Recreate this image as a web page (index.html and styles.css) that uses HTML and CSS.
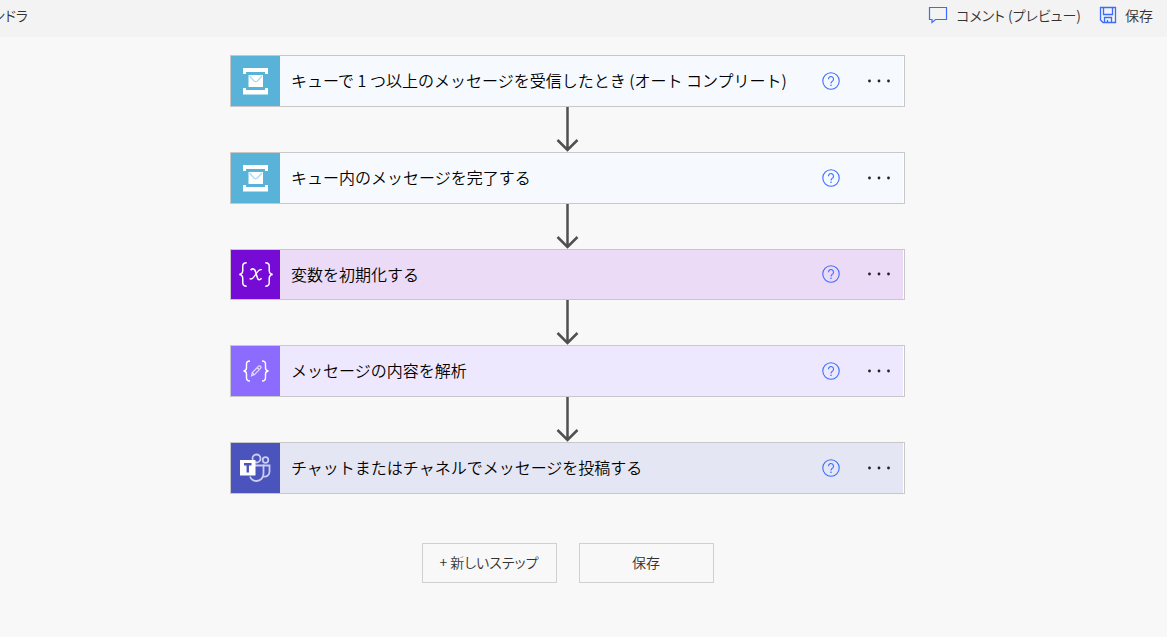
FILE: index.html
```html
<!DOCTYPE html>
<html lang="ja">
<head>
  <meta charset="UTF-8">
  <meta name="viewport" content="width=device-width, initial-scale=1.0">
  <title>フロー</title>
  <link rel="stylesheet" href="styles.css">
</head>
<body>
  <!-- shared icons -->
  <svg class="sprite" aria-hidden="true">
    <symbol id="icon-queue" viewBox="0 0 49 50">
      <path d="M12 12h25v6h-3v-2H15v2h-3zM12 38.500h25v-6.500h-3v2H15v-2h-3z" fill="#fff"/>
      <path d="M17.500 19h14.500v12H17.500z" fill="#fff"/>
      <path d="M18.500 20l4.500 5q1.700 1.300 3.400 0l4.600-5" fill="none" stroke="#a9d9ec" stroke-width="1.200"/>
    </symbol>
    <symbol id="icon-help" viewBox="0 0 18 18">
      <circle cx="9" cy="9" r="8.200" fill="none" stroke="currentColor" stroke-width="1.100"/>
      <path d="M6.500 7.200a2.500 2.500 0 1 1 4.300 1.600C9.800 9.700 9 10.200 9 11.400" fill="none" stroke="currentColor" stroke-width="1.100"/>
      <circle cx="9" cy="13.300" r=".8" fill="currentColor"/>
    </symbol>
    <symbol id="icon-more" viewBox="0 0 24 6">
      <g fill="#222">
        <circle cx="2.500" cy="3" r="1.400"/>
        <circle cx="12" cy="3" r="1.400"/>
        <circle cx="21.500" cy="3" r="1.400"/>
      </g>
    </symbol>
    <symbol id="icon-arrow" viewBox="0 0 25 45">
      <path d="M12.500 0v43M2.500 33l10 10 10-10" fill="none" stroke="#505050" stroke-width="2.500"/>
    </symbol>
  </svg>

  <header class="topbar">
    <div class="flow-name"><span>ンドラ</span></div>
    <div class="commands">
      <button class="command" type="button">
        <svg class="command-icon" viewBox="0 0 20 18" width="20" height="18">
          <path d="M1.500 1.500h17v12H7.500l-3.500 3v-3H1.500z" fill="none" stroke="currentColor" stroke-width="1.200"/>
        </svg>
        コメント (プレビュー)
      </button>
      <button class="command" type="button">
        <svg class="command-icon" viewBox="0 0 18 18" width="18" height="18">
          <path d="M1.500 1.500h15v15H4l-2.500-2.500zM4.500 1.500v7h9v-7M5.500 16.500v-5h7v5M8.500 16.500v-2.500" fill="none" stroke="currentColor" stroke-width="1.300"/>
        </svg>
        保存
      </button>
    </div>
  </header>

  <main class="designer">
    <div class="flow">
      <section class="card queue">
        <svg class="tile" viewBox="0 0 49 50"><use href="#icon-queue"/></svg>
        <h2 class="title">キューで 1 つ以上のメッセージを受信したとき (オート コンプリート)</h2>
        <button class="help" type="button" aria-label="ヘルプ"><svg width="18" height="18"><use href="#icon-help"/></svg></button>
        <button class="more" type="button" aria-label="メニュー"><svg width="24" height="6"><use href="#icon-more"/></svg></button>
      </section>
      <svg class="arrow"><use href="#icon-arrow"/></svg>

      <section class="card queue">
        <svg class="tile" viewBox="0 0 49 50"><use href="#icon-queue"/></svg>
        <h2 class="title">キュー内のメッセージを完了する</h2>
        <button class="help" type="button" aria-label="ヘルプ"><svg width="18" height="18"><use href="#icon-help"/></svg></button>
        <button class="more" type="button" aria-label="メニュー"><svg width="24" height="6"><use href="#icon-more"/></svg></button>
      </section>
      <svg class="arrow"><use href="#icon-arrow"/></svg>

      <section class="card variable">
        <svg class="tile" viewBox="0 0 49 50">
          <g fill="none" stroke="#fff" stroke-width="1.500">
            <path d="M15.500 13c-3 0-4 1-4 3.500v4.500c0 2.500-1 3.700-3.500 4 2.500.3 3.500 1.500 3.500 4v4.500c0 2.500 1 3.500 4 3.500"/>
            <path d="M34.500 13c3 0 4 1 4 3.500v4.500c0 2.500 1 3.700 3.500 4-2.500.3-3.500 1.500-3.500 4v4.500c0 2.500-1 3.500-4 3.500"/>
            <path d="M19.500 20.500c2-2 4-1.500 4.800 1l2.200 7c.8 2.300 2.300 2.500 4.200.3" stroke-width="1.600"/>
            <path d="M31 20.200c-2-1-3.500.2-5.500 3.500l-2 3c-1.800 2.800-3.200 3.500-5 2.500" stroke-width="1.300"/>
          </g>
        </svg>
        <h2 class="title">変数を初期化する</h2>
        <button class="help" type="button" aria-label="ヘルプ"><svg width="18" height="18"><use href="#icon-help"/></svg></button>
        <button class="more" type="button" aria-label="メニュー"><svg width="24" height="6"><use href="#icon-more"/></svg></button>
      </section>
      <svg class="arrow"><use href="#icon-arrow"/></svg>

      <section class="card parse">
        <svg class="tile" viewBox="0 0 49 50">
          <g fill="none" stroke="#fff" stroke-width="1.400">
            <path d="M19 15c-3 0-3.500 1-3.500 3v4c0 2-.8 2.800-3 3 2.200.2 3 1 3 3v4c0 2 .5 3 3.500 3"/>
            <path d="M31 15c3 0 3.500 1 3.500 3v4c0 2 .8 2.800 3 3-2.200.2-3 1-3 3v4c0 2-.5 3-3.500 3"/>
            <path d="M20.500 29.800l.8-3.300 6.200-6.200c1.500-1.300 3.300.5 2 2l-6.200 6.500zM26.200 21.500l2 2M21.500 27l2 2" stroke="#e2d9ff" stroke-width="1.200"/>
          </g>
        </svg>
        <h2 class="title">メッセージの内容を解析</h2>
        <button class="help" type="button" aria-label="ヘルプ"><svg width="18" height="18"><use href="#icon-help"/></svg></button>
        <button class="more" type="button" aria-label="メニュー"><svg width="24" height="6"><use href="#icon-more"/></svg></button>
      </section>
      <svg class="arrow"><use href="#icon-arrow"/></svg>

      <section class="card teams">
        <svg class="tile" viewBox="0 0 49 50">
          <g fill="none" stroke="#c9cef2" stroke-width="1.800">
            <circle cx="25.500" cy="15.500" r="4"/>
            <circle cx="34.500" cy="17" r="2.800"/>
            <path d="M24 22.500h8.500v8c0 4.500-3 7.500-7 7.500-3 0-5.300-1.500-6.500-4.500"/>
            <path d="M32 22.500h6.500v6c0 3.500-2.500 5.500-6 5"/>
          </g>
          <path d="M9 17h15.500v15.500H9z" fill="#fff"/>
          <path d="M13 21.200h7.500M16.750 21v8.500" fill="none" stroke="#4b53bc" stroke-width="2.400"/>
        </svg>
        <h2 class="title">チャットまたはチャネルでメッセージを投稿する</h2>
        <button class="help" type="button" aria-label="ヘルプ"><svg width="18" height="18"><use href="#icon-help"/></svg></button>
        <button class="more" type="button" aria-label="メニュー"><svg width="24" height="6"><use href="#icon-more"/></svg></button>
      </section>
    </div>

    <div class="actions">
      <button class="action" type="button">+ 新しいステップ</button>
      <button class="action" type="button">保存</button>
    </div>
  </main>
</body>
</html>
```
FILE: styles.css
```css
* {
  margin: 0;
  padding: 0;
  box-sizing: border-box;
}

body {
  font-family: "Noto Sans CJK JP", sans-serif;
  font-size: 16px;
  font-weight: 350;
  color: #000;
  background-color: #f8f8f8;
  min-height: 100vh;
}

button {
  font: inherit;
  color: inherit;
  background: none;
  border: none;
  cursor: pointer;
}

.sprite {
  display: none;
}

/* Top bar */
.topbar {
  display: flex;
  justify-content: space-between;
  align-items: center;
  height: 37px;
  padding: 0 14px 8px 0;
  background-color: #f3f3f3;
  color: #333;
  font-size: 14px;
  font-feature-settings: "palt", "kern";
}

.flow-name {
  display: flex;
  justify-content: flex-end;
  width: 28px;
  overflow: hidden;
  white-space: nowrap;
}

.commands {
  display: flex;
  gap: 18px;
}

.command {
  display: flex;
  align-items: center;
  gap: 8px;
  white-space: nowrap;
}

.command-icon {
  color: #3b6cff;
}

/* Flow */
.designer {
  display: flex;
  flex-direction: column;
  align-items: center;
  padding: 18px 32px 54px 0;
}

.flow {
  display: flex;
  flex-direction: column;
  align-items: center;
  width: 100%;
  max-width: 675px;
}

.card {
  display: flex;
  align-items: center;
  width: 100%;
  min-height: 51px;
  padding-right: 13px;
  border: 1px solid #c8c8c8;
  box-shadow: inset -1px 0 #fff;
}

.tile {
  flex: none;
  width: 49px;
  height: 50px;
}

.title {
  flex: 1;
  padding: 0 0 2px 11px;
  font-size: 16px;
  font-weight: 350;
}

.help,
.more {
  display: flex;
  align-items: center;
  justify-content: center;
  padding-bottom: 1px;
}

.help {
  color: #3b6cff;
  margin-right: 27px;
}

.more {
  height: 24px;
}

.arrow {
  width: 25px;
  height: 45px;
}

.queue {
  background-color: #f6faff;
}

.queue .tile {
  background-color: #59b3d9;
}

.variable {
  background-color: #ebdbf7;
}

.variable .tile {
  height: 49px;
  background-color: #770bd6;
}

.parse {
  background-color: #eee8ff;
}

.parse .tile {
  background-color: #8c6cff;
}

.teams {
  background-color: #e4e6f4;
}

.teams .tile {
  background-color: #4b53bc;
}

/* Bottom buttons */
.actions {
  display: flex;
  gap: 22px;
  margin-top: 49px;
}

.action {
  width: 135px;
  height: 40px;
  padding-bottom: 2px;
  border: 1px solid #d0d0d0;
  color: #333;
  font-size: 14px;
  font-feature-settings: "palt", "kern";
}
```
